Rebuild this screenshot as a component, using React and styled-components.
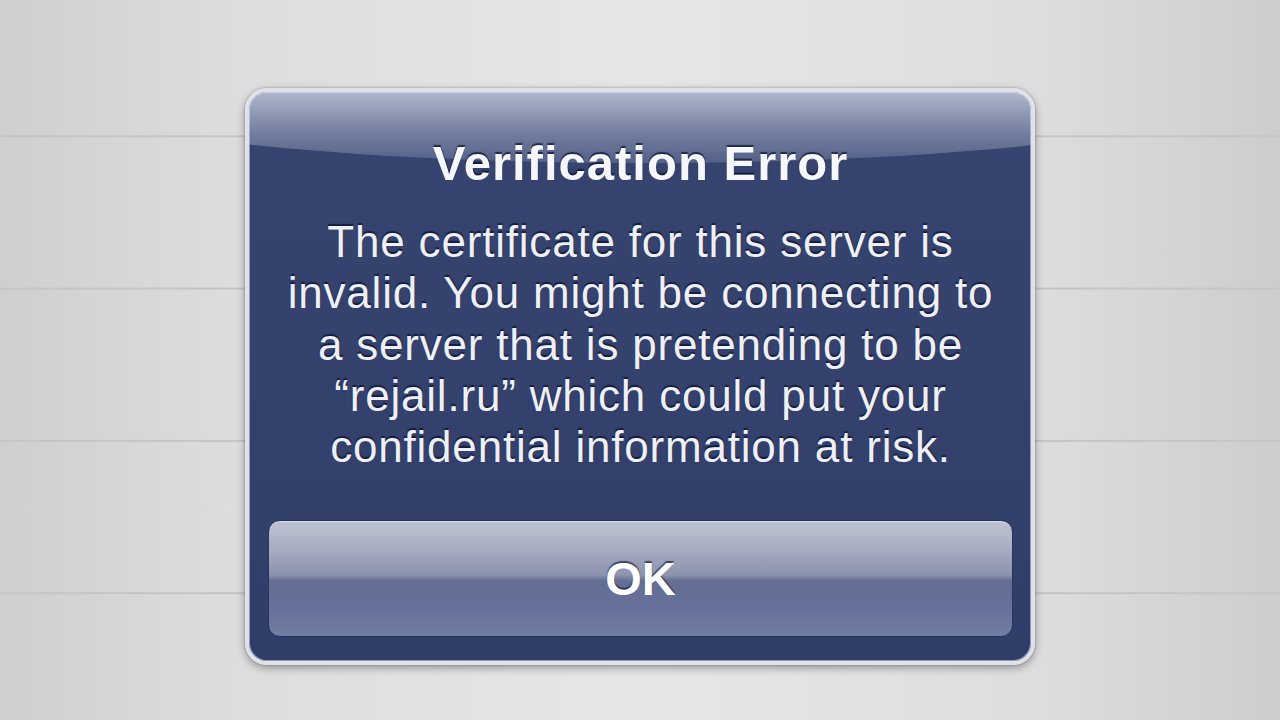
import React from "react";
import styled, { createGlobalStyle } from "styled-components";

const GlobalStyle = createGlobalStyle`
  html, body {
    margin: 0;
    padding: 0;
  }
  body {
    font-family: "Liberation Sans", Arial, Helvetica, sans-serif;
  }
`;

// grey lined backdrop, like the table view behind an iOS alert
const Screen = styled.div`
  width: 1280px;
  height: 720px;
  box-sizing: border-box;
  padding-top: 88px;
  display: flex;
  justify-content: center;
  align-items: flex-start;
  overflow: hidden;
  background-color: #dcdcdc;
  background-image: repeating-linear-gradient(
      to bottom,
      transparent 0,
      transparent 150px,
      #c5c5c5 150px,
      #c5c5c5 152.3px
    ),
    linear-gradient(
      to right,
      #cfcfcf 0%,
      #dedede 20%,
      #e6e6e6 50%,
      #dedede 80%,
      #cdcdcd 100%
    );
  background-size: 100% 152.3px, 100% 100%;
  background-position: 0 -15px, 0 0;
`;

const Alert = styled.div`
  position: relative;
  width: 790px;
  height: 577px;
  box-sizing: border-box;
  padding: 43px 18px 24px 19px;
  display: flex;
  flex-direction: column;
  align-items: stretch;
  border: 4px solid #dfe2ea;
  border-radius: 22px;
  background: linear-gradient(to bottom, #36446f 0%, #34416d 60%, #303d69 100%);
  box-shadow: inset 0 0 0 1px #8f99b6, 0 3px 8px rgba(0, 0, 0, 0.35),
    0 0 2px rgba(0, 0, 0, 0.3);
  overflow: hidden;

  /* curved gloss across the top */
  &::before {
    content: "";
    position: absolute;
    left: -205px;
    top: -79px;
    width: 1200px;
    height: 150px;
    border-radius: 50%;
    background: linear-gradient(
      to bottom,
      rgba(230, 234, 245, 0) 0%,
      rgba(230, 234, 245, 0.7) 52%,
      rgba(200, 206, 225, 0.42) 80%,
      rgba(170, 180, 210, 0.25) 100%
    );
    pointer-events: none;
  }
`;

const Title = styled.h1`
  position: relative;
  margin: 0;
  font-size: 49px;
  line-height: 56px;
  font-weight: 700;
  letter-spacing: 1px;
  text-align: center;
  color: #f6f7fa;
  text-shadow: 0 -2px 1px rgba(10, 18, 45, 0.75);
`;

const Message = styled.p`
  margin: 25px 0 0;
  font-size: 44px;
  line-height: 51.3px;
  font-weight: 400;
  letter-spacing: 0.8px;
  text-align: center;
  color: #eef0f5;
  text-shadow: 0 -2px 1px rgba(10, 18, 45, 0.75);
`;

const Button = styled.button`
  margin-top: auto;
  height: 117px;
  border: 1px solid #283460;
  border-radius: 12px;
  font-family: inherit;
  font-size: 47px;
  font-weight: 700;
  color: #ffffff;
  text-shadow: 0 -2px 1px rgba(20, 28, 60, 0.7);
  background: linear-gradient(
    to bottom,
    #bfc4d4 0%,
    #a9afc3 22%,
    #8c93ad 47%,
    #646e93 52%,
    #66709a 75%,
    #737ea3 100%
  );
  box-shadow: inset 0 1px 0 rgba(255, 255, 255, 0.45);
  cursor: pointer;
`;

export default function App() {
  return (
    <>
      <GlobalStyle />
      <Screen>
        <Alert role="alertdialog">
          <Title>Verification Error</Title>
          <Message>
            The certificate for this server is
            <br />
            invalid. You might be connecting to
            <br />
            a server that is pretending to be
            <br />
            “rejail.ru” which could put your
            <br />
            confidential information at risk.
          </Message>
          <Button>OK</Button>
        </Alert>
      </Screen>
    </>
  );
}
